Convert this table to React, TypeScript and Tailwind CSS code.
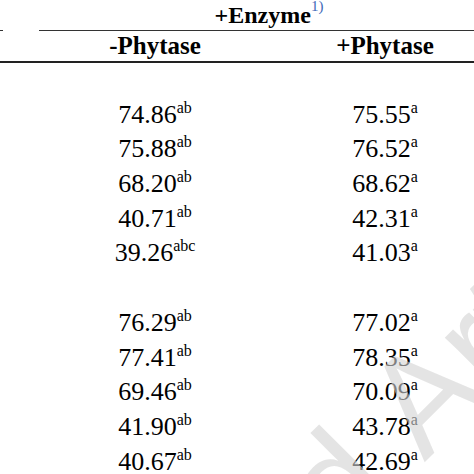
import React from 'react'

const groups = [
  [
    ['74.86', 'ab', '75.55', 'a'],
    ['75.88', 'ab', '76.52', 'a'],
    ['68.20', 'ab', '68.62', 'a'],
    ['40.71', 'ab', '42.31', 'a'],
    ['39.26', 'abc', '41.03', 'a'],
  ],
  [
    ['76.29', 'ab', '77.02', 'a'],
    ['77.41', 'ab', '78.35', 'a'],
    ['69.46', 'ab', '70.09', 'a'],
    ['41.90', 'ab', '43.78', 'a'],
    ['40.67', 'ab', '42.69', 'a'],
  ],
]

function Value({ n, sup }: { n: string; sup: string }) {
  return (
    <span>
      {n}
      <span className="relative -top-[10px] text-[16px] leading-none">{sup}</span>
    </span>
  )
}

export default function App() {
  return (
    <div className="relative w-[474px] h-[474px] overflow-hidden bg-white text-black font-[family-name:'Liberation_Serif',serif]">
      <div className="w-[499px]">
        {/* enzyme header */}
        <div className="flex h-[31px]">
          <div className="w-[39px] flex items-end">
            <div className="w-[3px] h-px bg-[#333]" />
          </div>
          <div className="w-[460px] border-b border-[#333] text-center font-bold text-[24px] leading-[29px] pt-px">
            +Enzyme
            <span className="relative -top-[12px] text-[15px] font-normal text-[#4169b8] leading-none">1)</span>
          </div>
        </div>
        {/* phytase header */}
        <div className="flex h-[32px] border-b-2 border-[#222] font-bold text-[25px] leading-[30px]">
          <div className="w-[39px]" />
          <div className="w-[232px] text-center">-Phytase</div>
          <div className="w-[228px] text-center">+Phytase</div>
        </div>
        {groups.map((rows, g) => (
          <div key={g}>
            <div className="h-[34.7px]" />
            {rows.map((r, i) => (
              <div key={i} className="flex h-[34.7px] text-[26px] leading-[34.7px]">
                <div className="w-[39px]" />
                <div className="w-[232px] text-center">
                  <Value n={r[0]} sup={r[1]} />
                </div>
                <div className="w-[228px] text-center">
                  <Value n={r[2]} sup={r[3]} />
                </div>
              </div>
            ))}
          </div>
        ))}
      </div>
      {/* watermark */}
      <div className="pointer-events-none absolute left-[440px] top-[478px] origin-top-left -rotate-45">
        <div className="absolute left-0 bottom-0 whitespace-nowrap font-[family-name:'Liberation_Sans',sans-serif] text-[140px] leading-none text-[rgba(210,210,210,0.6)]">
          Article
        </div>
        <div className="absolute right-[38px] bottom-0 whitespace-nowrap font-[family-name:'Liberation_Sans',sans-serif] text-[140px] leading-none text-[rgba(210,210,210,0.6)]">
          Accepted
        </div>
      </div>
    </div>
  )
}
